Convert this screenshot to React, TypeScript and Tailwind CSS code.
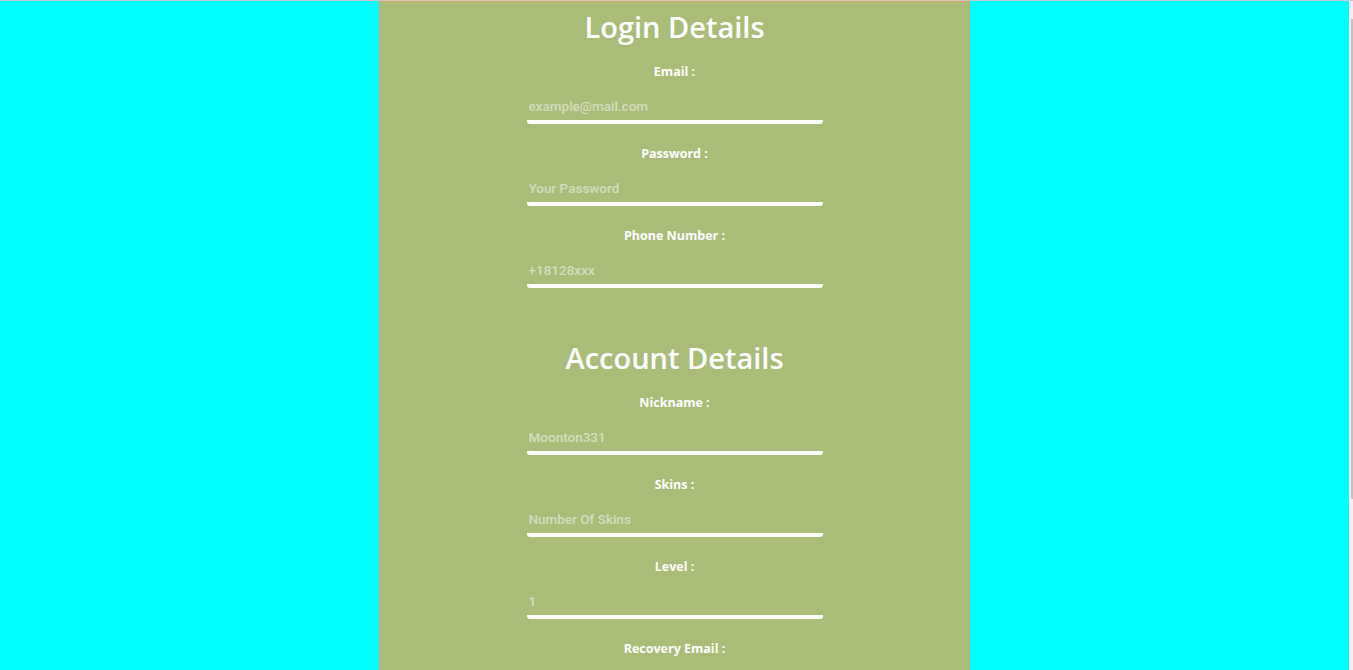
import React from 'react';

type Field = { label: string; placeholder: string; type?: string };

const login: Field[] = [
  { label: 'Email :', placeholder: 'example@mail.com', type: 'email' },
  { label: 'Password :', placeholder: 'Your Password', type: 'password' },
  { label: 'Phone Number :', placeholder: '+18128xxx', type: 'tel' },
];

const account: Field[] = [
  { label: 'Nickname :', placeholder: 'Moonton331' },
  { label: 'Skins :', placeholder: 'Number Of Skins' },
  { label: 'Level :', placeholder: '1' },
  { label: 'Recovery Email :', placeholder: 'example@mail.com' },
];

const FormField: React.FC<{ field: Field }> = ({ field }) => (
  <div className="flex flex-col items-center">
    <label className="font-['Open_Sans',sans-serif] text-[12.5px] font-bold leading-4 text-white">
      {field.label}
    </label>
    <input
      type={field.type ?? 'text'}
      placeholder={field.placeholder}
      className="mt-3 h-8 w-[296px] rounded-[3px] border-b-4 border-white bg-transparent px-[2px] font-['Roboto',sans-serif] text-[13.5px] font-medium text-white outline-none placeholder:text-[#d5ddc0]"
    />
  </div>
);

const Section: React.FC<{ title: string; fields: Field[] }> = ({ title, fields }) => (
  <section className="flex flex-col items-center">
    <h1 className="font-['Open_Sans',sans-serif] text-[29px] font-semibold leading-9 text-white">
      {title}
    </h1>
    <div className="mt-[19px] flex flex-col gap-[22px]">
      {fields.map((f) => (
        <FormField key={f.label} field={f} />
      ))}
    </div>
  </section>
);

export default function App() {
  return (
    <div className="flex h-[670px] flex-col overflow-hidden bg-white">
      <div className="h-px bg-[#c8c8c8]" />
      <div className="flex min-h-0 flex-1">
        <div className="flex flex-1 justify-center bg-[#00ffff]">
          <div className="flex w-[591px] flex-col gap-[52px] border-x border-t border-[#d9a35b] bg-[#a9bd79] pt-[7px] pb-10">
            <Section title="Login Details" fields={login} />
            <Section title="Account Details" fields={account} />
          </div>
        </div>
        <div className="flex w-1 flex-col bg-[#f1f1f1]">
          <div className="mt-[18px] ml-[2px] h-[480px] w-[2px] bg-[#c1c1c1]" />
        </div>
      </div>
    </div>
  );
}
